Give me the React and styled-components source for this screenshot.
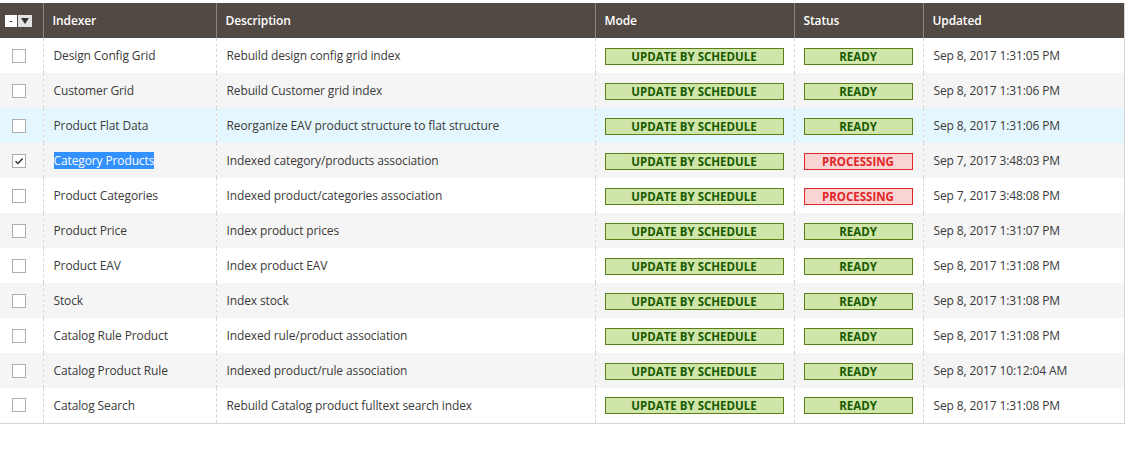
import React from 'react'
import styled, { createGlobalStyle } from 'styled-components'

const Global = createGlobalStyle`
  body {
    margin: 0;
    background: #fff;
    font-family: "Open Sans", "Noto Sans", sans-serif;
    color: #303030;
  }
`

const Wrap = styled.div`
  padding-top: 3px;
`

const Grid = styled.table`
  width: 1124px;
  border-collapse: collapse;
  table-layout: fixed;
  font-size: 12px;
  letter-spacing: -0.12px;
  border-right: 1px solid #d6d6d6;
  border-bottom: 1px solid #d6d6d6;
`

const Head = styled.th`
  background: #514943;
  color: #fff;
  font-weight: 600;
  text-align: left;
  height: 34px;
  padding: 0 10px 1px 9px;
  border-left: 1px solid #8a837f;
  vertical-align: middle;
  &:first-child {
    border-left: none;
    padding: 0 5px;
  }
`

const Row = styled.tr`
  background: ${p => (p.$hover ? '#e5f7fe' : p.$odd ? '#f5f5f5' : '#fff')};
`

const Cell = styled.td`
  box-sizing: border-box;
  height: 35px;
  padding: 0 10px;
  border-left: 1px dashed #d6d6d6;
  vertical-align: middle;
  white-space: nowrap;
  overflow: hidden;
  color: #3a3a3a;
  &:first-child {
    border-left: none;
    padding: 0 0 0 12px;
  }
`

const BadgeCell = styled(Cell)`
  padding: 1px 10px 0 9px;
`

const MassSelect = styled.div`
  display: flex;
  gap: 1px;
  align-items: center;
`

const MassBox = styled.span`
  width: ${p => (p.$wide ? 14 : 12)}px;
  height: 12px;
  background: ${p => (p.$grey ? '#e3e3e3' : '#fff')};
  display: flex;
  align-items: center;
  justify-content: center;
  color: #303030;
  font-size: 9px;
  font-weight: 700;
  line-height: 1;
`

const Check = styled.span`
  display: block;
  width: 14px;
  height: 14px;
  box-sizing: border-box;
  border: 1px solid #adadad;
  background: #fff;
  position: relative;
`

const Selected = styled.span`
  background: #3390ff;
  color: #fff;
`

const Badge = styled.div`
  box-sizing: border-box;
  height: 17px;
  border: 1px solid ${p => (p.$critical ? '#e22626' : '#5b8116')};
  background: ${p => (p.$critical ? '#f9d4d4' : '#d0e5a9')};
  color: ${p => (p.$critical ? '#e22626' : '#185b00')};
  font-size: 11.5px;
  letter-spacing: 0;
  font-weight: 700;
  text-transform: uppercase;
  text-align: center;
  line-height: 15px;
`

const rows = [
  ['Design Config Grid', 'Rebuild design config grid index', 'Ready', 'Sep 8, 2017 1:31:05 PM'],
  ['Customer Grid', 'Rebuild Customer grid index', 'Ready', 'Sep 8, 2017 1:31:06 PM'],
  ['Product Flat Data', 'Reorganize EAV product structure to flat structure', 'Ready', 'Sep 8, 2017 1:31:06 PM'],
  ['Category Products', 'Indexed category/products association', 'Processing', 'Sep 7, 2017 3:48:03 PM'],
  ['Product Categories', 'Indexed product/categories association', 'Processing', 'Sep 7, 2017 3:48:08 PM'],
  ['Product Price', 'Index product prices', 'Ready', 'Sep 8, 2017 1:31:07 PM'],
  ['Product EAV', 'Index product EAV', 'Ready', 'Sep 8, 2017 1:31:08 PM'],
  ['Stock', 'Index stock', 'Ready', 'Sep 8, 2017 1:31:08 PM'],
  ['Catalog Rule Product', 'Indexed rule/product association', 'Ready', 'Sep 8, 2017 1:31:08 PM'],
  ['Catalog Product Rule', 'Indexed product/rule association', 'Ready', 'Sep 8, 2017 10:12:04 AM'],
  ['Catalog Search', 'Rebuild Catalog product fulltext search index', 'Ready', 'Sep 8, 2017 1:31:08 PM'],
]

const widths = [43, 173, 379, 199, 129, 201]

export default function App() {
  return (
    <Wrap>
      <Global />
      <Grid>
        <colgroup>
          {widths.map((w, i) => <col key={i} style={{ width: w }} />)}
        </colgroup>
        <thead>
          <tr>
            <Head>
              <MassSelect>
                <MassBox>-</MassBox>
                <MassBox $wide $grey>
                  <svg width="8" height="6" viewBox="0 0 8 6"><path d="M0 0h8L4 6z" fill="#303030" /></svg>
                </MassBox>
              </MassSelect>
            </Head>
            <Head>Indexer</Head>
            <Head>Description</Head>
            <Head>Mode</Head>
            <Head>Status</Head>
            <Head>Updated</Head>
          </tr>
        </thead>
        <tbody>
          {rows.map(([name, desc, status, date], i) => (
            <Row key={name} $odd={i % 2 === 1} $hover={i === 2}>
              <Cell>
                <Check>
                  {i === 3 && (
                    <svg width="12" height="12" viewBox="0 0 12 12" style={{ position: 'absolute', left: 0, top: 0 }}>
                      <path d="M2.5 6.2l2.4 2.4 4.8-5" fill="none" stroke="#303030" strokeWidth="1.4" />
                    </svg>
                  )}
                </Check>
              </Cell>
              <Cell>{i === 3 ? <Selected>{name}</Selected> : name}</Cell>
              <Cell>{desc}</Cell>
              <BadgeCell><Badge>Update by Schedule</Badge></BadgeCell>
              <BadgeCell><Badge $critical={status === 'Processing'}>{status}</Badge></BadgeCell>
              <Cell>{date}</Cell>
            </Row>
          ))}
        </tbody>
      </Grid>
    </Wrap>
  )
}
